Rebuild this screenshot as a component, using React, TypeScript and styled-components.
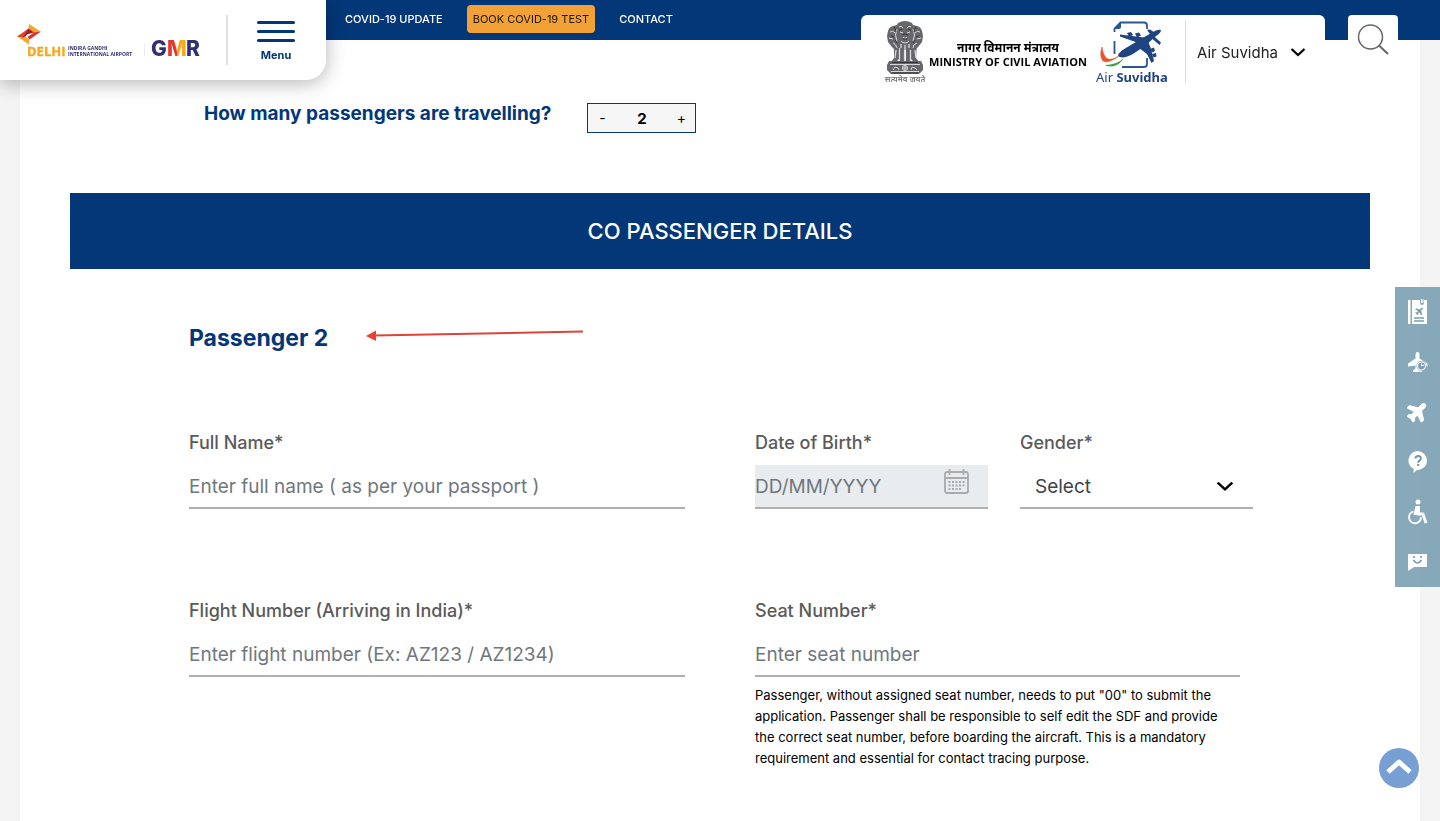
import React, { useState } from 'react';
import styled, { createGlobalStyle } from 'styled-components';

const navy = '#033777';
const sans = "Inter, 'Noto Sans', 'Liberation Sans', sans-serif";

const GlobalStyle = createGlobalStyle`
  *, *::before, *::after { box-sizing: border-box; }
  html, body { margin: 0; }
  body { background: #f4f4f4; font-family: ${sans}; color: #000; overflow-x: hidden; }
  button, input, select { font-family: inherit; }
`;

/* ---------- header ---------- */

const Header = styled.header`
  position: fixed;
  top: 0;
  left: 0;
  right: 0;
  z-index: 5;
  height: 40px;
  display: flex;
  align-items: flex-start;
  background: ${navy};
`;

const BrandPanel = styled.div`
  display: flex;
  align-items: center;
  width: 326px;
  height: 80px;
  flex: none;
  padding-left: 15px;
  background: #fff;
  border-bottom-right-radius: 20px;
  box-shadow: 0 3px 20px rgba(0, 0, 0, 0.3);
`;

const BrandLink = styled.a`
  display: flex;
  width: 211px;
`;

const MenuButton = styled.button`
  display: flex;
  flex-direction: column;
  align-items: center;
  gap: 5px;
  height: 50px;
  padding: 4px 0 0 29px;
  border: 0;
  border-left: 2px solid #e2e2e2;
  background: none;
  color: ${navy};
  font-size: 11px;
  font-weight: 700;
  line-height: 16px;
  cursor: pointer;
`;

const MenuBars = styled.span`
  display: flex;
  flex-direction: column;
  gap: 6px;
  width: 38px;
  padding-top: 2px;
`;

const MenuBar = styled.span`
  height: 3px;
  border-radius: 2px;
  background: ${navy};
`;

const TopNav = styled.nav`
  display: flex;
  align-items: center;
  gap: 24px;
  flex: 1;
  padding: 5px 0 0 19px;
  white-space: nowrap;
`;

const NavLink = styled.a<{ $highlight?: boolean }>`
  padding: 0 ${(p) => (p.$highlight ? '6px' : '0')};
  border-radius: 4px;
  background: ${(p) => (p.$highlight ? '#f1a136' : 'transparent')};
  color: ${(p) => (p.$highlight ? '#1d1608' : '#fff')};
  font-size: 11px;
  font-weight: ${(p) => (p.$highlight ? 400 : 500)};
  line-height: 28px;
  text-decoration: none;
`;

const MinistryPanel = styled.div`
  display: flex;
  align-items: center;
  width: 464px;
  height: 74px;
  flex: none;
  margin-top: 15px;
  padding-left: 22px;
  border-radius: 6px;
  background: #fff;
`;

const MinistryName = styled.p`
  width: 160px;
  margin: 0 8px 0 1px;
  padding-top: 6px;
  font-family: 'Open Sans', 'Noto Sans', sans-serif;
  font-size: 11px;
  font-weight: 700;
  line-height: 14px;
  text-align: center;
  white-space: nowrap;
`;

const HindiName = styled.span`
  display: block;
  font-family: 'Noto Sans', sans-serif;
  font-size: 12px;
  line-height: 14px;
`;

const SuvidhaButton = styled.button`
  display: flex;
  align-items: center;
  gap: 12px;
  height: 64px;
  margin-left: 16px;
  padding: 0 0 0 11px;
  border: 0;
  border-left: 1px solid #ddd;
  background: none;
  color: #222;
  font-size: 15px;
  white-space: nowrap;
  cursor: pointer;
`;

const SearchButton = styled.button`
  display: flex;
  justify-content: center;
  width: 50px;
  height: 50px;
  flex: none;
  margin: 15px 42px 0 23px;
  padding: 9px 0 0;
  border: 0;
  border-radius: 4px;
  background: #fff;
  cursor: pointer;
`;

/* ---------- page ---------- */

const Sheet = styled.main`
  min-height: 100vh;
  margin: 0 20px;
  padding: 103px 50px 50px;
  background: #fff;
`;

const CountRow = styled.div`
  display: flex;
  align-items: flex-start;
  gap: 36px;
  padding-left: 134px;
`;

const CountQuestion = styled.h2`
  margin: 0;
  color: ${navy};
  font-size: 19px;
  font-weight: 700;
  line-height: 22px;
`;

const Stepper = styled.div`
  display: flex;
  align-items: center;
  width: 109px;
  height: 30px;
  border: 1px solid ${navy};
  background: #f6f6f6;
`;

const StepButton = styled.button`
  width: 28px;
  padding: 0;
  border: 0;
  background: none;
  color: #000;
  font-size: 14px;
  line-height: 26px;
  cursor: pointer;
`;

const StepValue = styled.output`
  flex: 1;
  font-size: 15px;
  font-weight: 700;
  text-align: center;
`;

const Banner = styled.h2`
  margin: 60px 0 0;
  background: ${navy};
  color: #fff;
  font-size: 22px;
  font-weight: 500;
  line-height: 76px;
  text-align: center;
`;

const PassengerForm = styled.form`
  padding: 54px 117px 0 119px;
`;

const PassengerHeading = styled.div`
  display: flex;
  align-items: center;
  gap: 38px;
`;

const PassengerTitle = styled.h3`
  margin: 0;
  color: ${navy};
  font-size: 23px;
  font-weight: 700;
  line-height: 30px;
`;

const FieldGrid = styled.div`
  display: grid;
  grid-template-columns: 496fr 498fr;
  column-gap: 70px;
  row-gap: 88px;
  padding-top: 76px;
`;

const FieldPair = styled.div`
  display: grid;
  grid-template-columns: 1fr 1fr;
  gap: 32px;
`;

const Field = styled.div<{ $inset?: boolean }>`
  display: flex;
  flex-direction: column;
  gap: 8px;
  min-width: 0;
  padding-right: ${(p) => (p.$inset ? '13px' : '0')};
`;

const Label = styled.label`
  color: #5a5a5a;
  font-size: 18px;
  font-weight: 500;
  line-height: 28px;
`;

const Control = styled.div<{ $shaded?: boolean }>`
  display: flex;
  align-items: center;
  position: relative;
  height: 44px;
  border-bottom: 2px solid #b0b0b0;
  background: ${(p) => (p.$shaded ? '#e8ecef' : 'transparent')};
`;

const TextInput = styled.input`
  width: 100%;
  min-width: 0;
  height: 100%;
  padding: 0;
  border: 0;
  outline: 0;
  background: none;
  color: #495057;
  font-size: 19px;
  &::placeholder { color: #6f777e; opacity: 1; }
`;

const Dropdown = styled.select`
  width: 100%;
  height: 100%;
  padding: 0 45px 0 15px;
  border: 0;
  outline: 0;
  appearance: none;
  background: none;
  color: #3d444b;
  font-size: 19px;
`;

const ControlIcon = styled.span`
  position: absolute;
  top: 4px;
  right: 19px;
  display: flex;
  pointer-events: none;
`;

const DropdownIcon = styled(ControlIcon)`
  top: 12px;
`;

const Note = styled.p`
  margin: 0;
  font-size: 13px;
  line-height: 21px;
`;

/* ---------- floating tools ---------- */

const SideTools = styled.nav`
  position: fixed;
  top: 287px;
  right: 0;
  display: flex;
  flex-direction: column;
  width: 45px;
  background: rgba(112, 152, 173, 0.84);
`;

const SideLink = styled.a`
  display: flex;
  align-items: center;
  justify-content: center;
  height: 50px;
`;

const BackToTop = styled.button`
  position: fixed;
  right: 21px;
  bottom: 33px;
  display: flex;
  align-items: center;
  justify-content: center;
  width: 40px;
  height: 40px;
  padding: 0;
  border: 0;
  border-radius: 50%;
  background: #779fd3;
  cursor: pointer;
`;

/* ---------- drawings ---------- */

const AirportLogo = () => (
  <svg width="188" height="40" viewBox="0 0 188 40" role="img" aria-label="Delhi Indira Gandhi International Airport, GMR">
    <path d="M14 4 25.500 11.500 19 13.500 13.500 9z" fill="#f3a52c" />
    <path d="M2 16.500 13.500 8.500 15 11 8 18z" fill="#e0452f" />
    <path d="M13.500 8.500 19 12.500 12 14.500 9 18.500 8 17z" fill="#a3202c" />
    <path d="M26 11.500 14.500 19.500 12.500 17 19 12.500z" fill="#d8342f" />
    <path d="M2 16.500 8 18 10 16.500 14.500 19.500 14 24.500z" fill="#f3a52c" />
    <g fontFamily="'Open Sans', sans-serif" fontWeight="700">
      <text x="12" y="36" fontSize="13" fill="#f5a623" stroke="#f5a623" strokeWidth="0.400">DELHI</text>
      <g fontSize="5" fill="#2d2f6e">
        <text x="53" y="30">INDIRA GANDHI</text>
        <text x="53" y="36">INTERNATIONAL AIRPORT</text>
      </g>
    </g>
    <path d="M129.500 24v12" stroke="#ececec" />
    <defs>
      <linearGradient id="gmr">
        <stop offset="0.500" stopColor="#e4392f" />
        <stop offset="0.500" stopColor="#f6a821" />
      </linearGradient>
    </defs>
    <g fontFamily="Inter, sans-serif" fontWeight="800" fontSize="21">
      <text x="136" y="36" fill="#332f74">G</text>
      <text x="152" y="36" fill="url(#gmr)">M</text>
      <text x="171" y="36" fill="#332f74">R</text>
    </g>
  </svg>
);

const Emblem = () => (
  <svg width="44" height="64" viewBox="0 0 44 64" role="img" aria-label="State Emblem of India">
    <g fill="#66666b">
      <path d="M15 3q7-4 14 0l1 2 4 1q4 1 5 5l1 5-1 6-4 5-3 3H12l-3-3-4-5-1-6 1-5q1-4 5-5l4-1z" />
      <path d="M11 24h6l-1 15-3 3H8l3-4zM17 28h4v14l-4 1zM23 28h4v15l-4-1zM28 24h6l-1 14 3 4h-5l-3-3z" />
      <path d="M6 41h32l2 4v5l-4 4H8l-4-4v-5z" />
    </g>
    <g fill="none" stroke="#d9d9dc" strokeWidth="1">
      <path d="M16 7q2-2 4 1M24 8q2-3 4-1M17 12l3 1M24 13l3-1M20 17q2 3 4 0M18 21q4 4 8 0M7 12q3-2 5 1M32 13q2-3 5-1M6 18l4 1M34 19l4-1M10 23q3 1 4 5M34 23q-4 1-4 5M14 9q-3 6 0 12M30 9q3 6 0 12" />
      <path d="M16.500 28v12M21.500 30v11M27.500 30v11M13 30l-1 8M32 30l1 8M18 24v4M22 25v5M26 24v4" strokeWidth="1.300" />
      <path d="M7 44.500h30M8 51.500h28" />
      <circle cx="22" cy="48" r="2.600" />
      <path d="M22 46v4M20 48h4M10 50l2-3 3 1 1 2M28 50l1-3 3 1 2 2" />
    </g>
    <g fill="none" stroke="#2f2f33" strokeWidth="0.900">
      <path d="M16 10l3-1M25 9l3 1M19 15l3-1 3 1M8 16l3 1M33 17l3-1M12 20l2 3M32 20l-2 3M20 19h4M11 7q2 2 2 5M33 7q-2 2-2 5M9 42.500h26M9 53h26" />
    </g>
    <text x="22" y="62" textAnchor="middle" fontFamily="'Noto Sans', sans-serif" fontSize="8" fontWeight="600" fill="#77777b">सत्यमेव जयते</text>
  </svg>
);

const SuvidhaLogo = () => (
  <svg width="73" height="68" viewBox="0 0 73 68" role="img" aria-label="Air Suvidha">
    <path d="M18.500 14V10.500l6-6H48q3 0 3 3V11M18.500 23v13M51 40v6q0 3-3 3H26" fill="none" stroke="#2a5794" strokeWidth="1.800" />
    <path d="M18 11l7-7v5q0 2-2 2z" fill="#2a5794" />
    <g fill="#1e4482">
      <path d="M22 38q0-3.500 7-7.500L45 21l12-7q5-3 8-2 0 3-5 6L49 28l-13 8.500q-10 5-14 1.500z" />
      <path d="M24 16.500l4 .5 24 3-6 7-5-2.500-17-6z" />
      <path d="M46 26l6-3 3 8 3 12-2.500 2-4.500-9-8-6z" />
      <path d="M54 16l-3-4 3-.500 6 4zM58 18l3 3 4 3.500-1.500 2.500-7-6z" />
      <path d="M31 15l4-1 2 3-4 2zM39 15.500l4-1 2 3-4 2zM54 31l4-1.500 1 3.500-3 1.500zM56 36l4-1 .5 3.500-3 1z" />
    </g>
    <path d="M6 29Q3 38 7 43q5 3 16-5-8 5-12 2.500-4-3-5-11.500z" fill="#e8532c" stroke="#e8532c" strokeWidth="0.600" />
    <path d="M10 47q12-1 18-7-4 7-12 8.500l-6-.5z" fill="#3fa04a" />
    <text x="0" y="64" fontFamily="'Noto Sans', sans-serif" fontSize="13" fill="#1f4482">
      Air <tspan fontWeight="700">Suvidha</tspan>
    </text>
  </svg>
);

const Chevron = ({ size = 16 }: { size?: number }) => (
  <svg width={size} height={size} viewBox="0 0 16 16" fill="none" stroke="#000" strokeWidth="2.200" aria-hidden="true">
    <path d="M1.500 5 8 11l6.500-6" />
  </svg>
);

const SearchIcon = () => (
  <svg width="32" height="32" viewBox="0 0 32 32" fill="none" stroke="#666" strokeWidth="1.500" aria-hidden="true">
    <circle cx="13.500" cy="13" r="12" />
    <path d="M22 21.500 31 30" strokeWidth="2" />
  </svg>
);

const CalendarIcon = () => (
  <svg width="26" height="26" viewBox="0 0 26 26" fill="none" stroke="#a9abad" strokeWidth="1.800" aria-hidden="true">
    <rect x="2" y="3" width="23" height="21" rx="2" />
    <path d="M2 9h23M6.500 0v6M20.500 0v6" />
    <path d="M5.500 13h16M5.500 16.500h16M5.500 20h13" strokeWidth="2" strokeDasharray="2 1.500" />
  </svg>
);

const Arrow = () => (
  <svg width="218" height="20" viewBox="0 0 218 20" aria-hidden="true">
    <path d="M8 7.500 217 3.500" stroke="#db4437" strokeWidth="2" fill="none" />
    <path d="M0 8l10-5.500V13z" fill="#ee3f34" />
  </svg>
);

const PlaneShape = 'M21 16v-2l-8-5V3.500c0-.83-.67-1.500-1.500-1.500S10 2.670 10 3.500V9l-8 5v2l8-2.500V19l-2 1.500V22l3.500-1 3.500 1v-1.500L13 19v-5.500l8 2.500z';

const BoardingPassIcon = () => (
  <svg width="20" height="26" viewBox="0 0 20 26" aria-hidden="true">
    <path d="M0 1h2.500v24H0zM4 1h8v3q0 2 2 2t2-2V1h3v24H4z" fill="#fff" />
    <path d="M13.500 0v3.500h1.500V0" stroke="#fff" fill="none" />
    <path d="M6 19h10M6 22h10" stroke="#7a9db1" strokeWidth="1.300" />
    <path d={PlaneShape} fill="#7a9db1" stroke="#7a9db1" strokeWidth="1.500" transform="translate(11.500 12) rotate(45) scale(.42) translate(-11.500 -12)" />
  </svg>
);

const FlightStatusIcon = () => (
  <svg width="22" height="22" viewBox="0 0 22 22" aria-hidden="true">
    <path d="M10.500 1q2 0 2 3v3.500l8 5v3l-8-1v3l2.500 2v1.500H6v-1.500l2.500-2v-3l-7.500 1v-3l7.500-5V4q0-3 2-3z" fill="#fff" />
    <circle cx="14.500" cy="15" r="5" fill="#7a9db1" />
    <circle cx="14.500" cy="15" r="4" fill="none" stroke="#fff" strokeWidth="1.200" />
    <path d="M14.500 12.500V15l2.500-1" fill="none" stroke="#fff" />
  </svg>
);

const PlaneIcon = () => (
  <svg width="24" height="24" viewBox="0 0 24 24" aria-hidden="true">
    <path d={PlaneShape} fill="#fff" stroke="#fff" strokeWidth="2.200" strokeLinejoin="round" transform="rotate(45 12 12)" />
  </svg>
);

const HelpIcon = () => (
  <svg width="20" height="22" viewBox="0 0 20 22" aria-hidden="true">
    <path d="M10 0a9.500 9.500 0 1 1-1 19l-3.500 3 .2-4A9.500 9.500 0 0 1 10 0z" fill="#fff" />
    <path d="M7.500 7.500q0-2.500 2.700-2.500t2.600 2.300q0 1.500-1.300 2.300t-1.300 2.200M10.200 13v2" fill="none" stroke="#7196aa" strokeWidth="2" />
  </svg>
);

const AccessIcon = () => (
  <svg width="20" height="26" viewBox="0 0 20 26" fill="none" stroke="#fff" aria-hidden="true">
    <circle cx="10" cy="3" r="2.500" fill="#fff" stroke="none" />
    <path d="M7.500 7h4.500v9H5.500z" fill="#fff" stroke="none" />
    <path d="M5.500 12.500A6 6 0 1 0 13 18" strokeWidth="1.800" />
    <path d="M9 15h6l3 9" strokeWidth="2.800" strokeLinejoin="round" />
  </svg>
);

const FeedbackIcon = () => (
  <svg width="20" height="18" viewBox="0 0 20 18" aria-hidden="true">
    <path d="M0 1h19v13H6l-6 4z" fill="#fff" />
    <path d="M5.500 7q4 6 8 0M6 3v2M13 3v2" fill="none" stroke="#7196aa" strokeWidth="1.500" />
  </svg>
);

const tools = [
  { name: 'Boarding pass', Icon: BoardingPassIcon },
  { name: 'Flight status', Icon: FlightStatusIcon },
  { name: 'Flights', Icon: PlaneIcon },
  { name: 'Help', Icon: HelpIcon },
  { name: 'Accessibility', Icon: AccessIcon },
  { name: 'Feedback', Icon: FeedbackIcon },
];

export default function App() {
  const [count, setCount] = useState(2);

  return (
    <>
      <GlobalStyle />
      <Header>
        <BrandPanel>
          <BrandLink href="#home"><AirportLogo /></BrandLink>
          <MenuButton type="button">
            <MenuBars><MenuBar /><MenuBar /><MenuBar /></MenuBars>
            Menu
          </MenuButton>
        </BrandPanel>
        <TopNav>
          <NavLink href="#update">COVID-19 UPDATE</NavLink>
          <NavLink href="#test" $highlight>BOOK COVID-19 TEST</NavLink>
          <NavLink href="#contact">CONTACT</NavLink>
        </TopNav>
        <MinistryPanel>
          <Emblem />
          <MinistryName>
            <HindiName lang="hi">नागर विमानन मंत्रालय</HindiName>
            MINISTRY OF CIVIL AVIATION
          </MinistryName>
          <SuvidhaLogo />
          <SuvidhaButton type="button">Air Suvidha <Chevron /></SuvidhaButton>
        </MinistryPanel>
        <SearchButton type="button" aria-label="Search"><SearchIcon /></SearchButton>
      </Header>

      <Sheet>
        <CountRow>
          <CountQuestion>How many passengers are travelling?</CountQuestion>
          <Stepper>
            <StepButton type="button" aria-label="Fewer passengers" onClick={() => setCount(Math.max(1, count - 1))}>-</StepButton>
            <StepValue>{count}</StepValue>
            <StepButton type="button" aria-label="More passengers" onClick={() => setCount(count + 1)}>+</StepButton>
          </Stepper>
        </CountRow>

        <Banner>CO PASSENGER DETAILS</Banner>

        <PassengerForm>
          <PassengerHeading>
            <PassengerTitle>Passenger 2</PassengerTitle>
            <Arrow />
          </PassengerHeading>

          <FieldGrid>
            <Field>
              <Label htmlFor="name">Full Name*</Label>
              <Control><TextInput id="name" placeholder="Enter full name ( as per your passport )" /></Control>
            </Field>
            <FieldPair>
              <Field>
                <Label htmlFor="dob">Date of Birth*</Label>
                <Control $shaded>
                  <TextInput id="dob" placeholder="DD/MM/YYYY" />
                  <ControlIcon><CalendarIcon /></ControlIcon>
                </Control>
              </Field>
              <Field>
                <Label htmlFor="gender">Gender*</Label>
                <Control>
                  <Dropdown id="gender" defaultValue="">
                    <option value="">Select</option>
                  </Dropdown>
                  <DropdownIcon><Chevron size={18} /></DropdownIcon>
                </Control>
              </Field>
            </FieldPair>
            <Field>
              <Label htmlFor="flight">Flight Number (Arriving in India)*</Label>
              <Control><TextInput id="flight" placeholder="Enter flight number (Ex: AZ123 / AZ1234)" /></Control>
            </Field>
            <Field $inset>
              <Label htmlFor="seat">Seat Number*</Label>
              <Control><TextInput id="seat" placeholder="Enter seat number" aria-describedby="seat-note" /></Control>
              <Note id="seat-note">
                Passenger, without assigned seat number, needs to put "00" to submit the application. Passenger shall be
                responsible to self edit the SDF and provide the correct seat number, before boarding the aircraft. This
                is a mandatory requirement and essential for contact tracing purpose.
              </Note>
            </Field>
          </FieldGrid>
        </PassengerForm>
      </Sheet>

      <SideTools aria-label="Quick links">
        {tools.map(({ name, Icon }) => (
          <SideLink key={name} href="#tools" aria-label={name}><Icon /></SideLink>
        ))}
      </SideTools>
      <BackToTop type="button" aria-label="Back to top">
        <svg width="28" height="24" viewBox="0 0 28 24" fill="none" stroke="#fff" strokeWidth="5" aria-hidden="true">
          <path d="M3 16 14 6l11 10" strokeLinejoin="round" />
        </svg>
      </BackToTop>
    </>
  );
}
